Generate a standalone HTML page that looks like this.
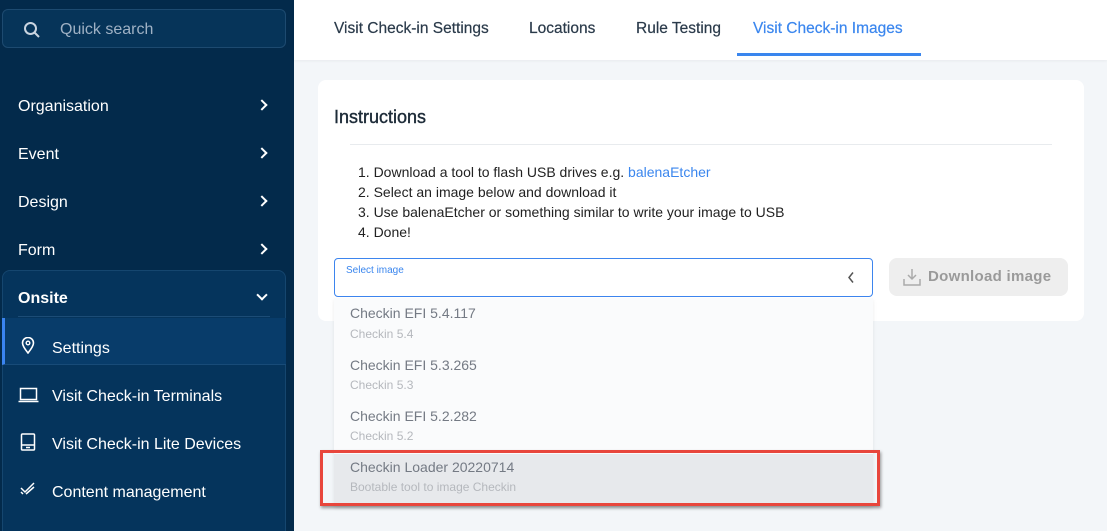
<!DOCTYPE html>
<html><head><meta charset="utf-8"><style>
*{box-sizing:border-box;margin:0;padding:0}
html,body{width:1107px;height:531px;overflow:hidden}
body{font-family:"Liberation Sans",sans-serif;background:#f3f6f9;position:relative}
.sb{position:absolute;left:0;top:0;width:294px;height:531px;background:#032a4b;overflow:hidden}
.search{position:absolute;left:2px;top:9px;width:284px;height:39px;border:1px solid #1d4a70;border-radius:6px;background:#063459}
.search span{position:absolute;left:57px;top:11px;color:#9fb1c4;font-size:16px}
.nav{position:absolute;left:18px;color:#fff;font-size:16px}
.chev{position:absolute;left:258px;width:8px;height:8px;border-right:2px solid #fff;border-top:2px solid #fff;transform:rotate(45deg)}
.onsite{position:absolute;left:2px;top:270px;width:284px;height:280px;background:#05345c;border:1px solid #15466f;border-radius:8px}
.sel{position:absolute;left:2px;top:318px;width:284px;height:47px;background:#083c6a;border-left:3px solid #3a84f0;border-bottom:1px solid #184b78}
.main{position:absolute;left:294px;top:0;width:813px;height:60px;background:#fff;box-shadow:0 1px 3px rgba(0,0,0,.05)}
.tab{position:absolute;top:20px;font-size:15.5px;color:#2a3a4a;-webkit-text-stroke:0.2px #2a3a4a}
.card{position:absolute;left:318px;top:80px;width:766px;height:241px;background:#fff;border-radius:8px}
.ins{position:absolute;left:16px;top:27px;font-size:18px;color:#1d2b38;-webkit-text-stroke:0.4px #1d2b38}
.hr{position:absolute;left:32px;top:64px;width:702px;height:1px;background:#e8ebee}
.ol{position:absolute;left:40px;top:82px;font-size:14px;color:#222;line-height:20px}
.sel2{position:absolute;left:334px;top:258px;width:539px;height:39px;border:1px solid #3d85ee;border-radius:4px;background:#fff}
.btn{position:absolute;left:889px;top:258px;width:179px;height:38px;background:#eeeeee;border-radius:8px;color:#9a9a9a;font-size:15px;font-weight:bold;letter-spacing:.3px}
.dd{position:absolute;left:334px;top:298px;width:539px;height:208px;background:#fafbfc;box-shadow:0 2px 4px rgba(0,0,0,.08)}
.it{position:absolute;left:16px;font-size:14px;color:#747a84}
.sub{position:absolute;left:16px;font-size:12px;color:#b5b8bd}
</style></head><body>
<div class="sb">
<div class="search"><svg style="position:absolute;left:20px;top:11px" width="18" height="18" viewBox="0 0 18 18"><circle cx="7.5" cy="7.5" r="5.5" stroke="#c9d4e0" stroke-width="2" fill="none"/><path d="M11.5 11.5L16 16" stroke="#c9d4e0" stroke-width="2"/></svg><span>Quick search</span></div>
<div class="nav" style="top:98px">Organisation</div><div class="chev" style="top:101px"></div>
<div class="nav" style="top:146px">Event</div><div class="chev" style="top:149px"></div>
<div class="nav" style="top:194px">Design</div><div class="chev" style="top:197px"></div>
<div class="nav" style="top:242px">Form</div><div class="chev" style="top:245px"></div>
<div class="onsite"></div>
<div style="position:absolute;left:18px;top:316px;width:252px;height:1px;background:#1c4c76"></div>
<div class="nav" style="top:290px;font-weight:bold">Onsite</div><div class="chev" style="top:291px;transform:rotate(135deg)"></div>
<div class="sel"></div>
<svg style="position:absolute;left:21px;top:337px" width="14" height="17" viewBox="0 0 14 17"><path d="M7 16C3 11 1.5 8.5 1.5 6a5.5 5.5 0 0111 0c0 2.5-1.5 5-5.5 10z" stroke="#fff" stroke-width="1.6" fill="none"/><circle cx="7" cy="6" r="1.8" stroke="#fff" stroke-width="1.4" fill="none"/></svg>
<div class="nav" style="top:340px;left:52px">Settings</div>
<svg style="position:absolute;left:18px;top:387px" width="21" height="16" viewBox="0 0 21 16"><rect x="2.5" y="1.5" width="16" height="11" stroke="#fff" stroke-width="1.5" fill="none"/><path d="M0.5 14.5h20" stroke="#fff" stroke-width="1.5"/></svg>
<div class="nav" style="top:388px;left:52px">Visit Check-in Terminals</div>
<svg style="position:absolute;left:20px;top:433px" width="16" height="18" viewBox="0 0 16 18"><rect x="1.5" y="1" width="13" height="16" rx="1" stroke="#fff" stroke-width="1.5" fill="none"/><path d="M1.5 12h13M6 14.5h4" stroke="#fff" stroke-width="1.5"/></svg>
<div class="nav" style="top:436px;left:52px">Visit Check-in Lite Devices</div>
<svg style="position:absolute;left:20px;top:482px" width="16" height="14" viewBox="0 0 16 14"><path d="M1 6l4 4 9-9M1 10l2 2M6 12l8-7" stroke="#fff" stroke-width="1.5" fill="none"/></svg>
<div class="nav" style="top:484px;left:52px">Content management</div>
</div>
<div class="main">
<div class="tab" style="left:40px">Visit Check-in Settings</div>
<div class="tab" style="left:235px">Locations</div>
<div class="tab" style="left:342px">Rule Testing</div>
<div class="tab" style="left:459px;color:#3a86ee;-webkit-text-stroke:0.2px #3a86ee">Visit Check-in Images</div>
<div style="position:absolute;left:443px;top:53px;width:184px;height:3px;background:#3a86ee"></div>
</div>
<div class="card">
<div class="ins">Instructions</div><div class="hr"></div>
<div class="ol">1. Download a tool to flash USB drives e.g. <span style="color:#3a86ee">balenaEtcher</span><br>2. Select an image below and download it<br>3. Use balenaEtcher or something similar to write your image to USB<br>4. Done!</div>
</div>
<div class="sel2"><span style="position:absolute;left:11px;top:6px;font-size:10px;color:#3a86ee">Select image</span><svg style="position:absolute;left:512px;top:12px" width="8" height="13" viewBox="0 0 8 13"><path d="M6 1.5L2 6.5l4 5" stroke="#555" stroke-width="1.5" fill="none"/></svg></div>
<div class="btn"><svg style="position:absolute;left:14px;top:10px" width="18" height="18" viewBox="0 0 18 18"><path d="M9 1v10M5 7l4 4 4-4M1 11v6h16v-6" stroke="#aaa" stroke-width="1.5" fill="none"/></svg><span style="position:absolute;left:39px;top:10px">Download image</span></div>
<div class="dd">
<div class="it" style="top:7px">Checkin EFI 5.4.117</div><div class="sub" style="top:29px">Checkin 5.4</div>
<div class="it" style="top:59px">Checkin EFI 5.3.265</div><div class="sub" style="top:80px">Checkin 5.3</div>
<div class="it" style="top:110px">Checkin EFI 5.2.282</div><div class="sub" style="top:131px">Checkin 5.2</div>
<div style="position:absolute;left:0;top:156px;width:539px;height:50px;background:#e7e9ec"></div>
<div class="it" style="top:161px">Checkin Loader 20220714</div><div class="sub" style="top:182px">Bootable tool to image Checkin</div>
</div>
<div style="position:absolute;left:320px;top:450px;width:560px;height:56px;border:3px solid #e8463c;box-shadow:1px 2px 3px rgba(0,0,0,.4)"></div>
</body></html>
